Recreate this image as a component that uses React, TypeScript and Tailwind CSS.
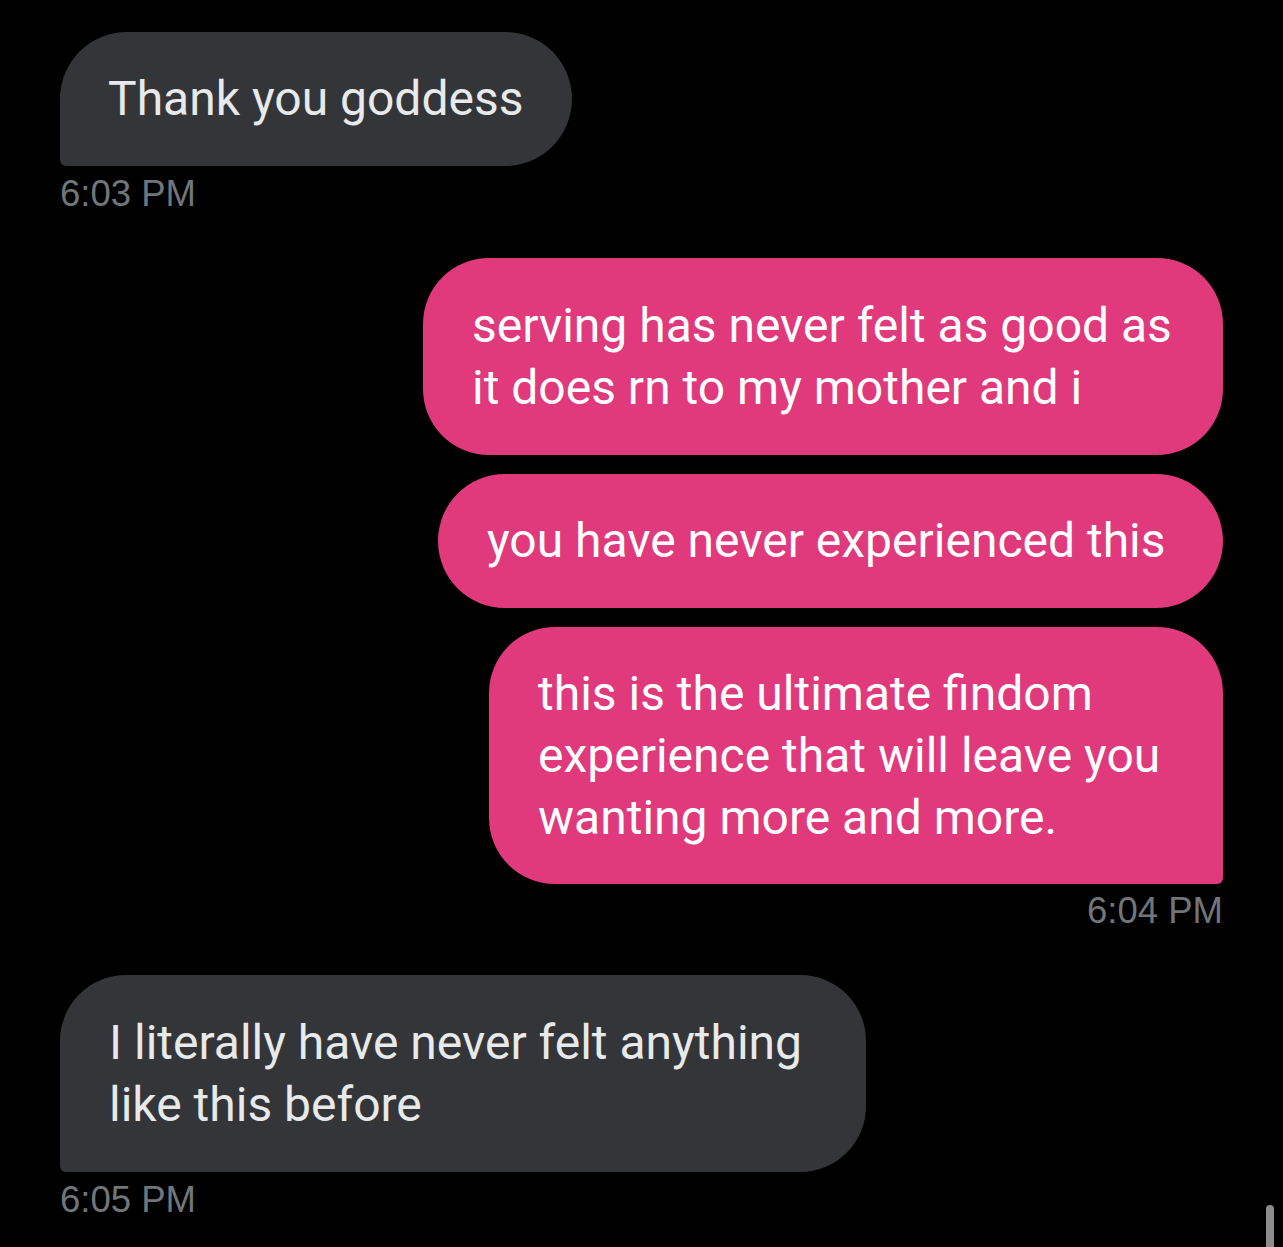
import React from "react";

const textFont = { fontFamily: "Roboto, 'Noto Sans', sans-serif" };

function Time({ children, right, mt }: { children: React.ReactNode; right?: boolean; mt: string }) {
  return (
    <div
      className={`text-[36.5px] leading-[44px] text-[#71767b] ${right ? "self-end" : "self-start"} ${mt}`}
      style={{ fontFamily: "'Liberation Sans', Arial, sans-serif" }}
    >
      {children}
    </div>
  );
}

export default function App() {
  return (
    <div className="relative w-[1283px] h-[1247px] bg-black overflow-hidden">
      <div className="flex flex-col pt-[32px] pl-[60px] pr-[60px]" style={textFont}>
        <div className="self-start w-[512px] h-[134px] bg-[#333538] rounded-[67px] rounded-bl-[6px] pl-[48px] flex items-center text-[48px] leading-[62px] text-[#e7e9ea] whitespace-nowrap">
          Thank you goddess
        </div>
        <Time mt="mt-[6px]">6:03 PM</Time>

        <div className="self-end mt-[42px] w-[800px] h-[197px] bg-[#e0397c] rounded-[66px] pl-[49px] flex flex-col justify-center text-[48px] leading-[62px] text-white whitespace-nowrap">
          <span>serving has never felt as good as</span>
          <span>it does rn to my mother and i</span>
        </div>
        <div className="self-end mt-[19px] w-[785px] h-[134px] bg-[#e0397c] rounded-[67px] pl-[49px] flex items-center text-[48px] leading-[62px] text-white whitespace-nowrap">
          you have never experienced this
        </div>
        <div className="self-end mt-[19px] w-[734px] h-[257px] bg-[#e0397c] rounded-[66px] rounded-br-[6px] pl-[49px] flex flex-col justify-center text-[48px] leading-[62px] text-white whitespace-nowrap">
          <span>this is the ultimate findom</span>
          <span>experience that will leave you</span>
          <span>wanting more and more.</span>
        </div>
        <Time right mt="mt-[5px]">6:04 PM</Time>

        <div className="self-start mt-[42px] w-[806px] h-[197px] bg-[#333538] rounded-[66px] rounded-bl-[6px] pl-[49px] flex flex-col justify-center text-[48px] leading-[62px] text-[#e7e9ea] whitespace-nowrap">
          <span>I literally have never felt anything</span>
          <span>like this before</span>
        </div>
        <Time mt="mt-[6px]">6:05 PM</Time>
      </div>
      <div className="absolute left-[1266px] top-[1205px] w-[8px] h-[60px] rounded-t-full bg-[#8c8c8c]" />
    </div>
  );
}
